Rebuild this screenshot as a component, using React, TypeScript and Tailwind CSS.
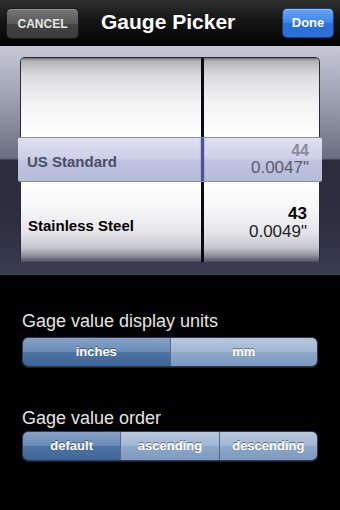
import React from "react";

const font = { fontFamily: '"Liberation Sans", Arial, sans-serif' };

function Segmented({ items, selected }: { items: string[]; selected: number }) {
  return (
    <div className="mx-[22px] flex h-[30px] overflow-hidden rounded-[6px] border border-[#2a3a56] shadow-[0_1px_0_rgba(255,255,255,0.12)]">
      {items.map((it, i) => (
        <div
          key={it}
          className={
            "flex flex-1 items-center justify-center text-[13px] font-bold text-white [text-shadow:0_-1px_0_rgba(0,0,0,0.45)] " +
            (i > 0 ? "border-l border-[#53698c] " : "") +
            (i === selected
              ? "bg-[linear-gradient(to_bottom,#86a1c8_0%,#6a8bb7_50%,#4d73a4_51%,#3f6698_100%)]"
              : "bg-[linear-gradient(to_bottom,#b8c8de_0%,#a0b5d2_50%,#8ea7c9_51%,#7e99bf_100%)]")
          }
        >
          {it}
        </div>
      ))}
    </div>
  );
}

export default function App() {
  return (
    <div className="h-[510px] w-[340px] overflow-hidden bg-black" style={font}>
      {/* Header */}
      <div className="flex h-[46px] items-start bg-[linear-gradient(to_bottom,#303030_0%,#151515_45%,#020202_100%)] px-[6px] pt-[8px]">
        <div className="flex h-[31px] w-[73px] items-center justify-center rounded-[5px] border border-[#1a1a1a] bg-[linear-gradient(to_bottom,#767676_0%,#585858_50%,#444444_51%,#3a3a3a_100%)] text-[12px] font-bold text-[#e6e6e6] shadow-[inset_0_1px_0_rgba(255,255,255,0.2)]">
          CANCEL
        </div>
        <div className="ml-[22px] pt-[3px] text-[21px] font-bold leading-none text-white">Gauge Picker</div>
        <div className="ml-auto flex h-[30px] w-[52px] items-center justify-center rounded-[5px] border border-[#1b3d82] bg-[linear-gradient(to_bottom,#6aa4f4_0%,#3c84ea_50%,#2a70dc_51%,#2b6fd8_100%)] text-[13px] font-bold text-white shadow-[inset_0_1px_0_rgba(255,255,255,0.3)]">
          Done
        </div>
      </div>

      {/* Picker */}
      <div className="h-[229px] bg-[linear-gradient(to_bottom,#c6c9d4_0%,#a2a6b5_20%,#6a6e80_49%,#2a2c3c_50%,#2e3042_80%,#3a3c50_100%)] pt-[11px]">
        {/* top row */}
        <div className="mx-[20px] flex h-[80px] overflow-hidden rounded-t-[5px] border-x border-t border-[#2a2a36]">
          <div className="w-[180px] bg-[linear-gradient(to_bottom,#6e6e74_0px,#b4b4b8_3px,#dcdcdf_18px,#f3f3f4_45px,#ffffff_80px)]" />
          <div className="w-[3px] bg-[#0c0c10]" />
          <div className="flex-1 bg-[linear-gradient(to_bottom,#6e6e74_0px,#b4b4b8_3px,#dcdcdf_18px,#f3f3f4_45px,#ffffff_80px)]" />
        </div>
        {/* selection band */}
        <div className="mx-[18px] flex h-[45px] rounded-[2px] border-y border-[#8a8eaa] bg-[linear-gradient(to_bottom,#dfe1f2_0%,#cdd0e8_45%,#bfc3df_55%,#b6bbd8_100%)]">
          <div className="w-[183px] pl-[9px] pt-[16px] text-[15px] font-bold leading-none text-[#4a4f66]">US Standard</div>
          <div className="w-[3px] bg-[#4a5290] shadow-[0_0_2px_#7880c0]" />
          <div className="flex flex-1 flex-col items-end pr-[13px] pt-[5px] leading-none">
            <div className="text-[16px] font-bold text-[#8a8c98]">44</div>
            <div className="text-[17px] text-[#5a5c6a]">0.0047"</div>
          </div>
        </div>
        {/* bottom row */}
        <div className="mx-[20px] flex h-[80px] overflow-hidden border-x border-[#2a2a36]">
          <div className="w-[180px] bg-[linear-gradient(to_bottom,#ffffff_0px,#f7f7f8_25px,#e6e6ea_50px,#c4c4cc_66px,#8c8c9c_74px,#4e4e62_80px)] pl-[7px] pt-[36px] text-[15px] font-bold leading-none text-black">
            Stainless Steel
          </div>
          <div className="w-[3px] bg-[#0c0c10]" />
          <div className="flex flex-1 flex-col items-end bg-[linear-gradient(to_bottom,#ffffff_0px,#f7f7f8_25px,#e6e6ea_50px,#c4c4cc_66px,#8c8c9c_74px,#4e4e62_80px)] pr-[12px] pt-[23px]">
            <div className="text-[17px] font-bold leading-[18px] text-black">43</div>
            <div className="text-[17px] leading-[18px] text-[#222]">0.0049"</div>
          </div>
        </div>
      </div>

      {/* Settings */}
      <div className="pt-[37px]">
        <div className="px-[22px] text-[18px] leading-none text-[#e4e4e4]">Gage value display units</div>
        <div className="mt-[7px]">
          <Segmented items={["inches", "mm"]} selected={0} />
        </div>
        <div className="mt-[42px] px-[22px] text-[18px] leading-none text-[#e4e4e4]">Gage value order</div>
        <div className="mt-[4px]">
          <Segmented items={["default", "ascending", "descending"]} selected={0} />
        </div>
      </div>
    </div>
  );
}
